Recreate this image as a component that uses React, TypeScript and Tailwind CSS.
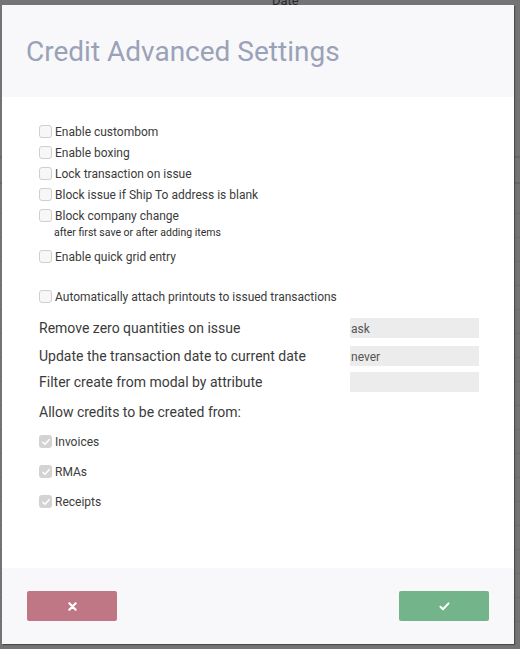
import React from "react";

const font = { fontFamily: "Roboto, 'Liberation Sans', sans-serif" };

function Box({ checked = false }: { checked?: boolean }) {
  if (checked) {
    return (
      <span className="flex h-[13px] w-[13px] shrink-0 items-center justify-center rounded-[3px] bg-[#d3d3d3]">
        <svg viewBox="0 0 12 12" className="h-[10px] w-[10px]">
          <path d="M2.2 6.3 L4.8 8.8 L9.8 3.2" fill="none" stroke="#ffffff" strokeWidth="1.8" strokeLinecap="round" strokeLinejoin="round" />
        </svg>
      </span>
    );
  }
  return <span className="h-[13px] w-[13px] shrink-0 rounded-[3px] border border-[#cfcfcf] bg-[#f7f7f7]" />;
}

function CheckRow({ label, checked = false }: { label: string; checked?: boolean }) {
  return (
    <div className="flex h-[21px] items-center gap-[3px] text-[12px] text-[#3b3b3b]">
      <Box checked={checked} />
      <span>{label}</span>
    </div>
  );
}

function FieldRow({ label, value, className }: { label: string; value: string; className: string }) {
  return (
    <div className={"flex h-[20px] items-center " + className}>
      <span className="w-[311px] text-[14px] text-[#3b3b3b]">{label}</span>
      <div className="flex h-[20px] w-[129px] items-end bg-[#ececec] px-[1px] pb-[1px] text-[12px] leading-[16px] text-[#555]">
        {value}
      </div>
    </div>
  );
}

export default function App() {
  const lines = [156, 182, 213, 237, 261, 285, 309, 333, 357, 381, 405, 429, 453, 477, 501, 525, 549, 573, 597, 621];
  return (
    <div className="relative h-[649px] w-[520px] overflow-hidden bg-[#747474]" style={font}>
      <div className="absolute left-[272px] top-[-9px] text-[13px] text-[#2a2a2a]">Date</div>
      {lines.map((y, i) => (
        <div
          key={y}
          className={i < 2 ? "absolute left-0 right-0 h-[2px] bg-[#686868]" : "absolute left-0 right-0 h-px bg-[#6c6c6c]"}
          style={{ top: y }}
        />
      ))}

      <div className="absolute left-[2px] top-[5px] flex h-[639px] w-[512px] flex-col bg-white shadow-[1px_1px_1px_rgba(0,0,0,0.35)]">
        <div className="flex h-[92px] items-center bg-[#f8f8fa] pl-[24px] pt-[2px]">
          <h1 className="text-[28px] font-normal text-[#9aa2b8]">Credit Advanced Settings</h1>
        </div>

        <div className="flex h-[471px] flex-col pl-[37px] pt-[24px]">
          <CheckRow label="Enable custombom" />
          <CheckRow label="Enable boxing" />
          <CheckRow label="Lock transaction on issue" />
          <CheckRow label="Block issue if Ship To address is blank" />
          <CheckRow label="Block company change" />
          <div className="mb-[6px] h-[14px] pl-[15px] text-[10.5px] leading-[14px] text-[#2f2f2f]">after first save or after adding items</div>
          <CheckRow label="Enable quick grid entry" />
          <div className="mt-[19px]">
            <CheckRow label="Automatically attach printouts to issued transactions" />
          </div>

          <FieldRow label="Remove zero quantities on issue" value="ask" className="mt-[11px]" />
          <FieldRow label="Update the transaction date to current date" value="never" className="mt-[8px]" />
          <FieldRow label="Filter create from modal by attribute" value="" className="mt-[6px]" />

          <div className="mt-[10px] h-[20px] text-[14px] leading-[20px] text-[#3b3b3b]">Allow credits to be created from:</div>
          <div className="mt-[9px] flex flex-col gap-[9px]">
            <CheckRow label="Invoices" checked />
            <CheckRow label="RMAs" checked />
            <CheckRow label="Receipts" checked />
          </div>
        </div>

        <div className="flex flex-1 items-start justify-between bg-[#f8f8fa] px-[25px] pt-[23px]">
          <button className="flex h-[30px] w-[90px] items-center justify-center rounded-[2px] bg-[#c07785]">
            <svg viewBox="0 0 10 10" className="h-[9px] w-[9px]">
              <path d="M1.5 1.5 L8.5 8.5 M8.5 1.5 L1.5 8.5" stroke="#ffffff" strokeWidth="2.4" strokeLinecap="round" />
            </svg>
          </button>
          <button className="flex h-[30px] w-[90px] items-center justify-center rounded-[2px] bg-[#74b48a]">
            <svg viewBox="0 0 12 10" className="h-[9px] w-[11px]">
              <path d="M1.5 5.2 L4.3 8 L10.5 1.5" fill="none" stroke="#ffffff" strokeWidth="2.2" strokeLinecap="round" strokeLinejoin="round" />
            </svg>
          </button>
        </div>
      </div>
    </div>
  );
}
